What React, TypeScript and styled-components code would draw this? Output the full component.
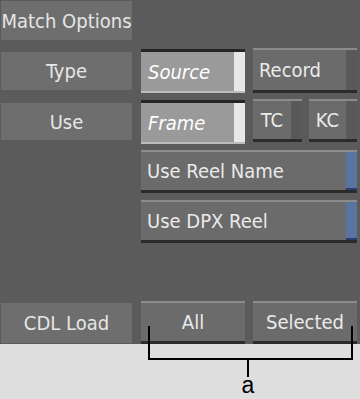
import React from "react";
import styled, { createGlobalStyle } from "styled-components";

const Global = createGlobalStyle`
  html, body { margin: 0; padding: 0; background: #dedede; }
  body { width: 360px; height: 399px; font-family: "DejaVu Sans Condensed", "DejaVu Sans", sans-serif; }
`;

const Page = styled.div`
  position: relative;
  width: 360px;
  height: 399px;
`;

const Panel = styled.div`
  background: #5b5b5b;
  height: 344px;
  box-sizing: border-box;
  padding: 1px 0 0 1px;
  display: flex;
  flex-direction: column;
`;

const Row = styled.div<{ $top: number; $h: number }>`
  display: flex;
  align-items: flex-start;
  gap: 8px;
  margin-top: ${(p) => p.$top}px;
  height: ${(p) => p.$h}px;
`;

const Pair = styled.div`
  display: flex;
  gap: 7px;
  flex: none;
`;

const Label = styled.div<{ $offset?: number; $h: number }>`
  width: 131px;
  flex: none;
  height: ${(p) => p.$h}px;
  margin-top: ${(p) => p.$offset ?? 0}px;
  margin-right: 1px;
  background: #6e6e6e;
  color: #e6e6e6;
  font-size: 20px;
  display: flex;
  align-items: center;
  justify-content: center;
  white-space: nowrap;
  overflow: hidden;
`;

const Spacer = styled.div`
  width: 132px;
  flex: none;
`;

const Btn = styled.div<{ $w: number; $h?: number }>`
  width: ${(p) => p.$w}px;
  height: ${(p) => p.$h ?? 44}px;
  box-sizing: border-box;
  display: flex;
  flex: none;
  background: #6b6b6b;
  border-top: 2px solid #8c8c8c;
  border-bottom: 3px solid #2b2b2b;
  color: #eaeaea;
  font-size: 20px;
`;

const BtnText = styled.div<{ $align?: "left" | "center" }>`
  flex: 1;
  display: flex;
  align-items: center;
  justify-content: ${(p) => (p.$align === "center" ? "center" : "flex-start")};
  padding-left: ${(p) => (p.$align === "center" ? 0 : 6)}px;
  white-space: nowrap;
  overflow: hidden;
`;

const Strip = styled.div<{ $color: string; $bottom?: string }>`
  width: 11px;
  flex: none;
  background: ${(p) => p.$color};
  box-shadow: inset 0 -2px 0 ${(p) => p.$bottom ?? p.$color};
`;

const Toggle = styled.div`
  width: 104px;
  height: 44px;
  margin-top: 1px;
  box-sizing: border-box;
  display: flex;
  flex: none;
  background: #9a9a9a;
  border-top: 3px solid #262626;
  border-bottom: 2px solid #bcbcbc;
  color: #ffffff;
  font-size: 20px;
  font-style: italic;
`;

const ToggleText = styled.div`
  flex: 1;
  display: flex;
  align-items: center;
  padding-left: 7px;
  white-space: nowrap;
`;

const Annotation = styled.svg`
  position: absolute;
  left: 0;
  top: 0;
  pointer-events: none;
`;

const Callout = styled.div`
  position: absolute;
  left: 233px;
  top: 372px;
  width: 30px;
  text-align: center;
  font-family: "Liberation Sans", Arial, sans-serif;
  font-size: 23px;
  color: #000;
  line-height: normal;
`;

export default function App() {
  return (
    <>
      <Global />
      <Page>
        <Panel>
          <Row $top={0} $h={39}>
            <Label $h={39}>Match Options</Label>
          </Row>
          <Row $top={8} $h={45}>
            <Label $offset={4} $h={38}>Type</Label>
            <Toggle>
              <ToggleText>Source</ToggleText>
              <Strip $color="#e8e8e8" />
            </Toggle>
            <Btn $w={104} $h={45}>
              <BtnText>Record</BtnText>
              <Strip $color="#595959" />
            </Btn>
          </Row>
          <Row $top={6} $h={45}>
            <Label $offset={4} $h={37}>Use</Label>
            <Toggle>
              <ToggleText>Frame</ToggleText>
              <Strip $color="#e8e8e8" />
            </Toggle>
            <Pair>
              <Btn $w={49} $h={43}>
                <BtnText $align="center">TC</BtnText>
                <Strip $color="#595959" />
              </Btn>
              <Btn $w={48} $h={43}>
                <BtnText $align="center">KC</BtnText>
                <Strip $color="#595959" />
              </Btn>
            </Pair>
          </Row>
          <Row $top={6} $h={43}>
            <Spacer />
            <Btn $w={216} $h={43}>
              <BtnText>Use Reel Name</BtnText>
              <Strip $color="#5a74a0" $bottom="#2e3a72" />
            </Btn>
          </Row>
          <Row $top={7} $h={43}>
            <Spacer />
            <Btn $w={216} $h={43}>
              <BtnText>Use DPX Reel</BtnText>
              <Strip $color="#5a74a0" $bottom="#2e3a72" />
            </Btn>
          </Row>
          <Row $top={58} $h={43}>
            <Label $offset={2} $h={40}>CDL Load</Label>
            <Btn $w={104} $h={43}>
              <BtnText $align="center">All</BtnText>
            </Btn>
            <Btn $w={104} $h={43}>
              <BtnText $align="center">Selected</BtnText>
            </Btn>
          </Row>
        </Panel>
        <Annotation width="360" height="399" viewBox="0 0 360 399">
          <path d="M149 326 V359 H352 V326 M248 359 V377" fill="none" stroke="#000" strokeWidth="2" />
        </Annotation>
        <Callout>a</Callout>
      </Page>
    </>
  );
}
